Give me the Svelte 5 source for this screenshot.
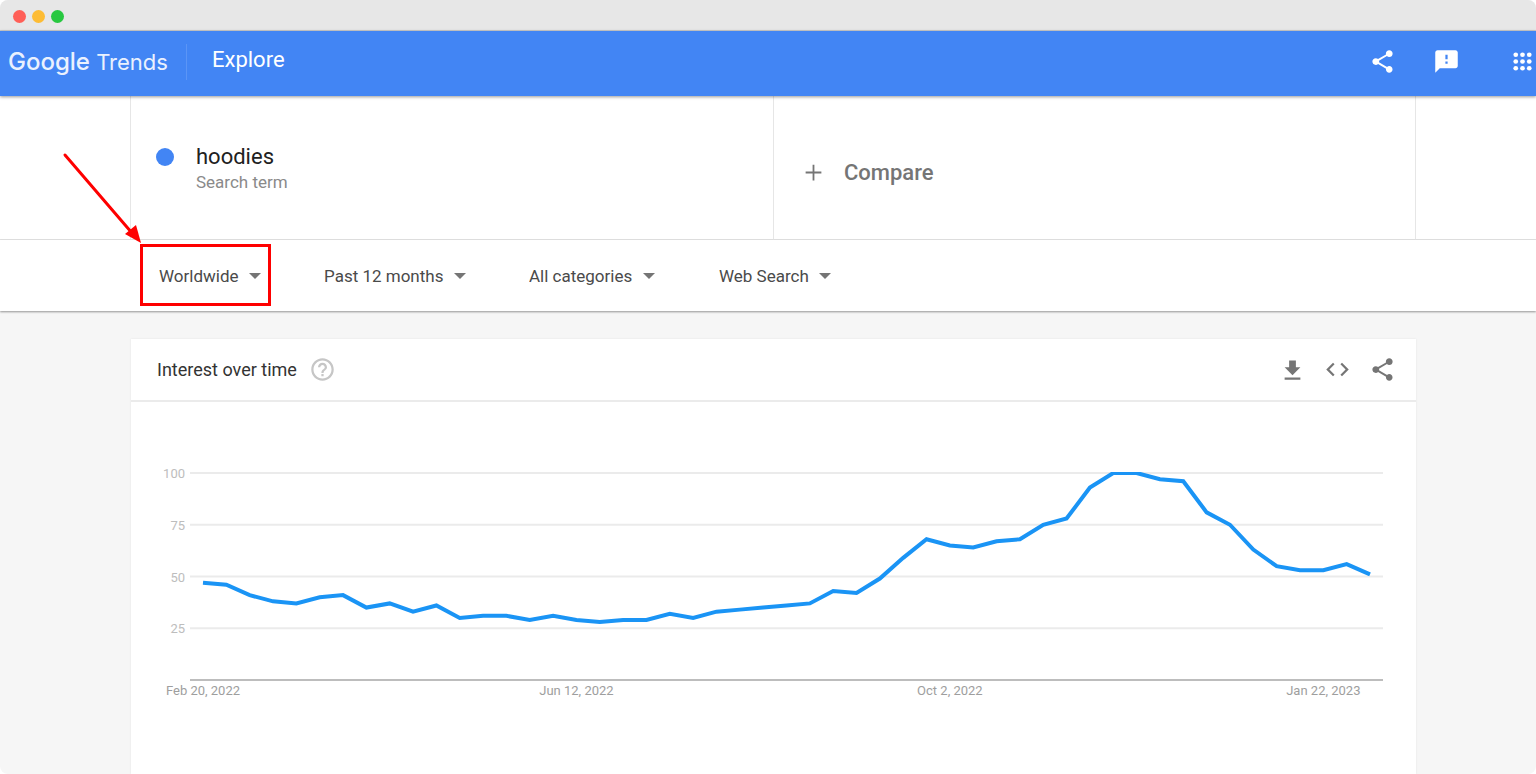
<script>
    const filters = [
        { id: "geo", name: "Location", value: "Worldwide", marked: true },
        { id: "date", name: "Time range", value: "Past 12 months" },
        { id: "cat", name: "Category", value: "All categories" },
        { id: "gprop", name: "Search type", value: "Web Search" },
    ];

    const values = [
        47, 46, 41, 38, 37, 40, 41, 35, 37, 33, 36, 30, 31, 31, 29, 31, 29, 28, 29, 29, 32, 30, 33,
        34, 35, 36, 37, 43, 42, 49, 59, 68, 65, 64, 67, 68, 75, 78, 93, 100, 100, 97, 96, 81, 75,
        63, 55, 53, 53, 56, 51,
    ];
    const dates = [
        { week: 0, text: "Feb 20, 2022" },
        { week: 16, text: "Jun 12, 2022" },
        { week: 32, text: "Oct 2, 2022" },
        { week: 48, text: "Jan 22, 2023" },
    ];
    const ticks = [25, 50, 75, 100];

    const top = 12;
    const bottom = 219;
    const left = 33;
    const inset = 13;

    const sharePath =
        "M18 16.08c-.76 0-1.44.3-1.96.77L8.91 12.7c.05-.23.09-.46.09-.7s-.04-.47-.09-.7l7.05-4.11c.54.5 1.25.81 2.04.81 1.66 0 3-1.34 3-3s-1.34-3-3-3-3 1.34-3 3c0 .24.04.47.09.7L8.04 9.81C7.5 9.31 6.79 9 6 9c-1.66 0-3 1.34-3 3s1.34 3 3 3c.79 0 1.5-.31 2.04-.81l7.12 4.16c-.05.21-.08.43-.08.65 0 1.61 1.31 2.92 2.92 2.92s2.92-1.31 2.92-2.92-1.31-2.92-2.92-2.92z";

    let width = 0;

    $: x = (week) => left + inset + (week * (width - left - 2 * inset)) / (values.length - 1);
    $: y = (value) => bottom - ((bottom - top) * value) / 100;
    $: points = values.map((value, week) => `${x(week)},${y(value)}`).join(" ");
</script>

<div class="window">
    <div class="titlebar">
        <span class="light red"></span>
        <span class="light yellow"></span>
        <span class="light green"></span>
    </div>

    <header>
        <a class="logo" href="#home"><b>Google</b> Trends</a>
        <h1>Explore</h1>
        <div class="tools">
            <button aria-label="Share">
                <svg viewBox="0 0 24 24"><path d={sharePath} /></svg>
            </button>
            <button aria-label="Send feedback">
                <svg viewBox="0 0 24 24">
                    <path
                        d="M20 2H4c-1.1 0-1.99.9-1.99 2L2 22l4-4h14c1.1 0 2-.9 2-2V4c0-1.1-.9-2-2-2zm-7 12h-2v-2h2v2zm0-4h-2V6h2v4z"
                    />
                </svg>
            </button>
            <button class="apps" aria-label="Google apps">
                <svg viewBox="0 0 24 24">
                    {#each [6, 12, 18] as cy}
                        {#each [6, 12, 18] as cx}
                            <circle {cx} {cy} r="2.1" />
                        {/each}
                    {/each}
                </svg>
            </button>
        </div>
    </header>

    <section class="terms">
        <div class="term">
            <span class="dot"></span>
            <div>
                <div class="name">hoodies</div>
                <div class="kind">Search term</div>
            </div>
        </div>
        <button class="compare">
            <svg viewBox="0 0 24 24"><path d="M19 12.8h-6.2V19h-1.6v-6.2H5v-1.6h6.2V5h1.6v6.2H19z" /></svg>
            Compare
        </button>
    </section>

    <section class="filters">
        {#each filters as filter}
            <div class="filter">
                <select id={filter.id} aria-label={filter.name}>
                    <option>{filter.value}</option>
                </select>
                <svg class="caret" viewBox="0 0 12 6"><path d="M0 0h12l-6 6z" /></svg>
                {#if filter.marked}
                    <span class="mark"></span>
                    <svg class="arrow" viewBox="0 0 80 92">
                        <path class="shaft" d="M3 3 70 81" />
                        <path d="M79 91 63 82 74 73z" />
                    </svg>
                {/if}
            </div>
        {/each}
    </section>

    <main>
        <div class="card">
            <div class="card-head">
                <h2>Interest over time</h2>
                <button class="help" aria-label="Help">
                    <svg viewBox="0 0 24 24">
                        <path
                            d="M11 18h2v-2h-2v2zm1-16C6.48 2 2 6.48 2 12s4.48 10 10 10 10-4.48 10-10S17.52 2 12 2zm0 18c-4.41 0-8-3.59-8-8s3.59-8 8-8 8 3.59 8 8-3.59 8-8 8zm0-14c-2.21 0-4 1.79-4 4h2c0-1.1.9-2 2-2s2 .9 2 2c0 2-3 1.75-3 5h2c0-2.25 3-2.5 3-5 0-2.21-1.79-4-4-4z"
                        />
                    </svg>
                </button>
                <div class="actions">
                    <button aria-label="Download">
                        <svg viewBox="0 0 24 24"><path d="M19 10h-4V4H9v6H5l7 7 7-7zM5 19v2h14v-2H5z" /></svg>
                    </button>
                    <button aria-label="Embed">
                        <svg viewBox="0 0 24 24">
                            <path
                                d="M9.4 16.6L4.8 12l4.6-4.6L8 6l-6 6 6 6 1.4-1.4zm5.2 0l4.6-4.6-4.6-4.6L16 6l6 6-6 6-1.4-1.4z"
                            />
                        </svg>
                    </button>
                    <button aria-label="Share chart">
                        <svg viewBox="0 0 24 24"><path d={sharePath} /></svg>
                    </button>
                </div>
            </div>

            <div class="chart" bind:clientWidth={width}>
                {#if width}
                    <svg {width} height="240" role="img" aria-label="Interest over time">
                        <clipPath id="plot">
                            <rect x={left} y={top - 1} width={width - left} height={bottom - top} />
                        </clipPath>
                        {#each ticks as tick}
                            <line class="grid" x1={left} x2={width} y1={y(tick)} y2={y(tick)} />
                            <text class="tick" x={left - 5} y={y(tick) + 5}>{tick}</text>
                        {/each}
                        <line class="axis" x1={left} x2={width} y1={bottom} y2={bottom} />
                        <polyline {points} clip-path="url(#plot)" />
                        {#each dates as date}
                            <text class="date" x={x(date.week)} y={bottom + 15}>{date.text}</text>
                        {/each}
                    </svg>
                {/if}
            </div>
        </div>
    </main>
</div>

<style>
    :global(body) {
        background: #fff;
        font-family: Roboto, "Liberation Sans", sans-serif;
    }
    .window {
        display: flex;
        flex-direction: column;
        box-sizing: border-box;
        min-height: 100vh;
        overflow: hidden;
        border-radius: 8px;
        background: #f6f6f6;
    }
    .titlebar {
        display: flex;
        align-items: center;
        gap: 6px;
        height: 31px;
        padding: 2px 13px 0;
        box-sizing: border-box;
        background: #e7e7e7;
        border-bottom: 1px solid #ccc;
    }
    .light {
        width: 13px;
        height: 13px;
        border-radius: 50%;
    }
    .red {
        background: #ff5f57;
    }
    .yellow {
        background: #fdbc34;
    }
    .green {
        background: #28c840;
    }
    button {
        display: flex;
        align-items: center;
        padding: 0;
        border: 0;
        background: none;
        color: inherit;
        font: inherit;
        cursor: pointer;
    }
    button svg {
        width: 27px;
        height: 27px;
        fill: currentColor;
    }
    header {
        position: relative;
        display: flex;
        align-items: center;
        box-sizing: border-box;
        height: 65px;
        padding: 0 0 4px 8px;
        background: #4285f4;
        color: #fff;
        box-shadow: 0 1px 3px rgba(0, 0, 0, 0.4);
    }
    .logo {
        width: 178px;
        color: #eaf1fe;
        font: 22px Inter, sans-serif;
        text-decoration: none;
        white-space: nowrap;
    }
    .logo b {
        font-size: 24px;
        font-weight: 500;
    }
    h1 {
        margin: 0;
        padding: 0 0 4px 25px;
        border-left: 1px solid #5b95f6;
        font-size: 22px;
        font-weight: 400;
        line-height: 32px;
    }
    .tools {
        display: flex;
        gap: 37px;
        margin-left: auto;
    }
    .apps {
        margin-left: 12px;
    }
    .terms {
        display: grid;
        grid-template-columns: 1fr 1fr;
        height: 143px;
        padding: 0 120px 0 130px;
        background: #fff;
        border-bottom: 1px solid #e4e4e4;
    }
    .term,
    .compare {
        border-left: 1px solid #e6e6e6;
    }
    .term {
        display: flex;
        gap: 22px;
        padding: 47px 25px;
    }
    .dot {
        width: 18px;
        height: 18px;
        margin-top: 5px;
        border-radius: 50%;
        background: #4285f4;
    }
    .name {
        color: #212121;
        font-size: 22px;
        line-height: 28px;
    }
    .kind {
        color: #8a8a8a;
        font-size: 17px;
        line-height: 22px;
    }
    .compare {
        gap: 17px;
        padding: 8px 26px 0;
        border-right: 1px solid #e6e6e6;
        color: #757575;
        font-size: 22px;
        font-weight: 500;
    }
    .filters {
        position: relative;
        display: grid;
        grid-template-columns: 165px 205px 190px auto;
        align-items: center;
        height: 71px;
        padding-left: 159px;
        background: #fff;
        box-shadow: 0 1px 2px rgba(0, 0, 0, 0.4);
    }
    .filter {
        position: relative;
        display: flex;
        align-items: center;
    }
    select {
        appearance: none;
        margin-right: -12px;
        padding: 0 22px 0 0;
        border: 0;
        background: none;
        color: #4a4a4a;
        font: 17px/24px Roboto, "Liberation Sans", sans-serif;
    }
    .caret {
        width: 12px;
        height: 6px;
        fill: #757575;
        pointer-events: none;
    }
    .mark {
        position: absolute;
        top: -20px;
        left: -19px;
        width: 125px;
        height: 56px;
        border: 3px solid #fe0000;
        pointer-events: none;
    }
    .arrow {
        position: absolute;
        top: -112px;
        left: -97px;
        width: 80px;
        height: 92px;
        fill: #fe0000;
        pointer-events: none;
    }
    .shaft {
        stroke: #fe0000;
        stroke-width: 3;
        stroke-linecap: round;
    }
    main {
        display: flex;
        flex: 1;
        padding: 28px 120px 0 131px;
    }
    .card {
        flex: 1;
        min-width: 0;
        background: #fff;
        box-shadow: 0 0 2px rgba(0, 0, 0, 0.08);
    }
    .card-head {
        display: flex;
        align-items: center;
        height: 61px;
        padding: 0 20px 0 26px;
        border-bottom: 2px solid #ebebeb;
    }
    h2 {
        margin: 0;
        color: #333;
        font-size: 18px;
        font-weight: 400;
    }
    .help {
        margin-left: 12px;
        color: #c6c6c6;
    }
    .actions {
        display: flex;
        gap: 18px;
        margin-left: auto;
        color: #757575;
    }
    .chart {
        height: 240px;
        margin: 59px 33px 0 26px;
    }
    .chart svg {
        display: block;
        overflow: visible;
    }
    .grid {
        stroke: #ebebeb;
        stroke-width: 2;
    }
    .axis {
        stroke: #bdbdbd;
        stroke-width: 2;
    }
    polyline {
        fill: none;
        stroke: #1a94f5;
        stroke-width: 4;
    }
    text {
        font-size: 13px;
    }
    .tick {
        fill: #bdbdbd;
        text-anchor: end;
    }
    .date {
        fill: #9e9e9e;
        text-anchor: middle;
    }
</style>
